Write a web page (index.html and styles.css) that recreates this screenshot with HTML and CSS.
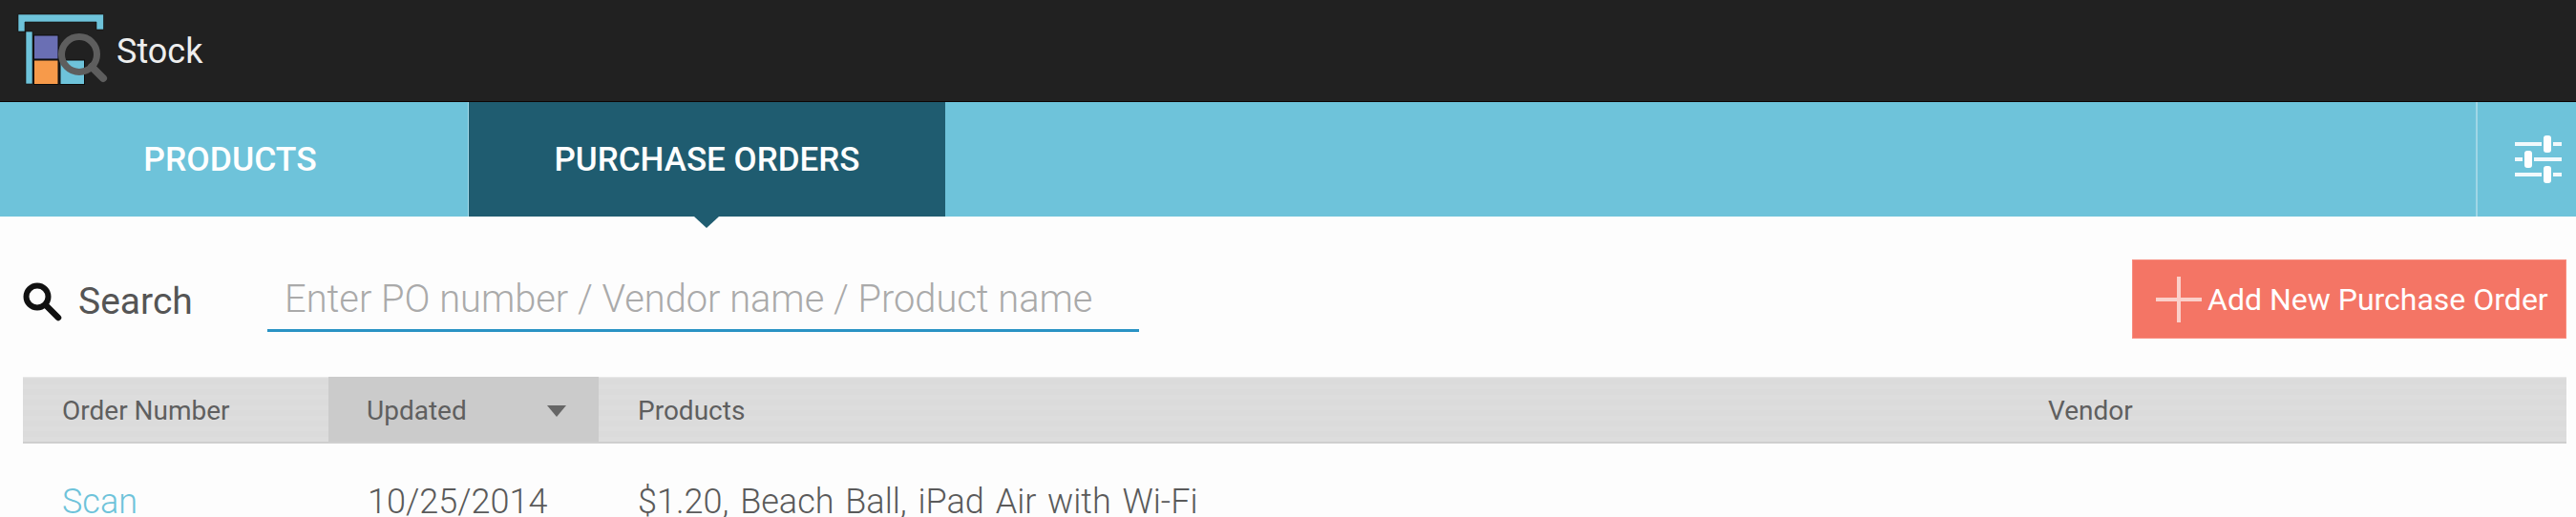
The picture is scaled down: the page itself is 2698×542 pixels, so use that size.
FILE: index.html
```html
<!DOCTYPE html>
<html lang="en">
<head>
    <meta charset="UTF-8">
    <title>Stock</title>
    <link rel="stylesheet" href="styles.css">
</head>
<body>
    <header class="top-bar">
        <svg class="logo" width="120" height="107" viewBox="0 0 120 107">
            <path d="M19 15H108.500V31H101V23H26V33H34V88H27V33H19Z" fill="#6ec3da" stroke="#0c0c0c" stroke-width=".6"/>
            <rect x="35.500" y="37" width="25.500" height="25" fill="#6a6fb4" stroke="#0c0c0c"/>
            <rect x="35.500" y="63" width="25.500" height="25.500" fill="#f79a4a" stroke="#0c0c0c"/>
            <rect x="63" y="63" width="25.500" height="25.500" fill="#6ec3da" stroke="#0c0c0c"/>
            <circle cx="83" cy="57" r="18.500" fill="none" stroke="#5e5e5e" stroke-width="7"/>
            <path d="M96 70L108 82" stroke="#5e5e5e" stroke-width="8" stroke-linecap="round"/>
        </svg>
        <span class="app-name">Stock</span>
    </header>

    <nav class="tabs">
        <a class="tab" href="#">PRODUCTS</a>
        <a class="tab active" href="#">PURCHASE ORDERS</a>
        <div class="tabs-right">
            <svg width="49" height="50" viewBox="0 0 49 50">
                <g fill="#fff">
                    <rect x="0" y="7" width="49" height="4" opacity=".9"/>
                    <rect x="0" y="23" width="49" height="4" opacity=".9"/>
                    <rect x="0" y="39" width="49" height="4" opacity=".9"/>
                </g>
                <g fill="#fff" stroke="#6ec3da" stroke-width="2">
                    <rect x="29" y="-1" width="10" height="20" rx="4"/>
                    <rect x="9" y="15" width="10" height="20" rx="4"/>
                    <rect x="29" y="31" width="10" height="20" rx="4"/>
                </g>
            </svg>
        </div>
    </nav>

    <main class="content">
        <div class="toolbar">
            <div class="search-label">
                <svg width="42" height="42" viewBox="0 0 42 42">
                    <circle cx="16" cy="16" r="11.500" fill="none" stroke="#111" stroke-width="6"/>
                    <path d="M25 25L38 38" stroke="#111" stroke-width="6.500" stroke-linecap="round"/>
                </svg>
                <span>Search</span>
            </div>
            <div class="search-input">Enter PO number / Vendor name / Product name</div>
            <button class="add-btn">
                <svg width="48" height="48" viewBox="0 0 48 48">
                    <path d="M24 0V48M0 24H48" stroke="#fbd0ca" stroke-width="4"/>
                </svg>
                <span>Add New Purchase Order</span>
            </button>
        </div>

        <div class="order-table">
            <div class="table-head">
                <div class="col">Order Number</div>
                <div class="col sorted">Updated<span class="sort-arrow"></span></div>
                <div class="col">Products</div>
                <div class="col">Vendor</div>
            </div>
            <div class="table-row">
                <div class="col"><a href="#">Scan</a></div>
                <div class="col">10/25/2014</div>
                <div class="col">$1.20, Beach Ball, iPad Air with Wi-Fi</div>
                <div class="col"></div>
            </div>
        </div>
    </main>
</body>
</html>
```

FILE: styles.css
```css
html, body {
    margin: 0;
    height: 542px;
    overflow: hidden;
}

body {
    background-color: #fdfdfd;
    font-family: Roboto, "Liberation Sans", sans-serif;
}

a {
    text-decoration: none;
}

.top-bar {
    display: flex;
    align-items: center;
    height: 106px;
    background-color: #212121;
    border-bottom: 1px solid #0d0505;
}

.logo {
    display: block;
    flex-shrink: 0;
}

.app-name {
    margin: 2px 0 0 2px;
    color: #eee;
    font-size: 36px;
}

.tabs {
    display: flex;
    height: 120px;
    background-color: #6ec3da;
}

.tab {
    display: flex;
    align-items: center;
    justify-content: center;
    width: 491px;
    padding-right: 8px;
    border-right: 1px solid #a5dcea;
    box-sizing: border-box;
    color: #fff;
    font-size: 35.500px;
    font-weight: 500;
}

.tab.active {
    position: relative;
    width: 499px;
    padding-right: 0;
    background-color: #1f5c70;
    border-right: 0;
    font-size: 35px;
}

/* little pointer under the selected tab */
.tab.active::after {
    content: "";
    position: absolute;
    left: 236px;
    top: 120px;
    border-left: 13px solid transparent;
    border-right: 13px solid transparent;
    border-top: 12px solid #1f5c70;
}

.tabs-right {
    display: flex;
    align-items: center;
    margin-left: auto;
    width: 105px;
    padding-left: 39px;
    box-sizing: border-box;
    border-left: 2px solid #a0d6e6;
}

.content {
    padding: 0 10px 0 24px;
}

.toolbar {
    display: flex;
    align-items: flex-start;
    height: 168px;
}

.search-label {
    display: flex;
    align-items: center;
    gap: 17px;
    width: 256px;
    margin-top: 66px;
    color: #555;
    font-size: 39px;
}

.search-label svg {
    margin-left: -1px;
}

.search-input {
    width: 913px;
    height: 71px;
    margin-top: 50px;
    padding: 13px 0 0 18px;
    box-sizing: border-box;
    border-bottom: 3px solid #2a93c4;
    color: #aaa;
    font-size: 39.800px;
    font-weight: 300;
    line-height: 48px;
}

.add-btn {
    display: flex;
    align-items: center;
    gap: 6px;
    width: 455px;
    height: 83px;
    margin: 45px 0 0 auto;
    padding: 0 0 0 24px;
    box-sizing: border-box;
    background-color: #f47565;
    border: 1px solid #f88d80;
    color: #fff;
    font-family: inherit;
    font-size: 32px;
}

.table-head,
.table-row {
    display: grid;
    grid-template-columns: 320px 283px 1477px 584px;
}

.table-head {
    height: 70px;
    box-sizing: border-box;
    padding-top: 2px;
    background: repeating-linear-gradient(0deg, #dddddd 0 5px, #dbdbdb 5px 11px);
    border-top: 1px solid #e8e8e8;
    border-bottom: 2px solid #cfcfcf;
    color: #5f5f5f;
    font-size: 28px;
}

.table-head .col {
    display: flex;
    align-items: center;
    padding-left: 41px;
}

.table-head .sorted {
    position: relative;
    margin-top: -3px;
    background-color: #cbcbcb;
    padding-left: 40px;
    padding-top: 3px;
}

.sort-arrow {
    position: absolute;
    right: 34px;
    top: 30px;
    border-left: 10px solid transparent;
    border-right: 10px solid transparent;
    border-top: 12px solid #666;
}

.table-row {
    padding-top: 40px;
    color: #5a5a5a;
    font-size: 36px;
    font-weight: 300;
    word-spacing: 3px;
}

.table-row .col {
    padding-left: 41px;
}

.table-row a {
    color: #6ec3da;
}
```
